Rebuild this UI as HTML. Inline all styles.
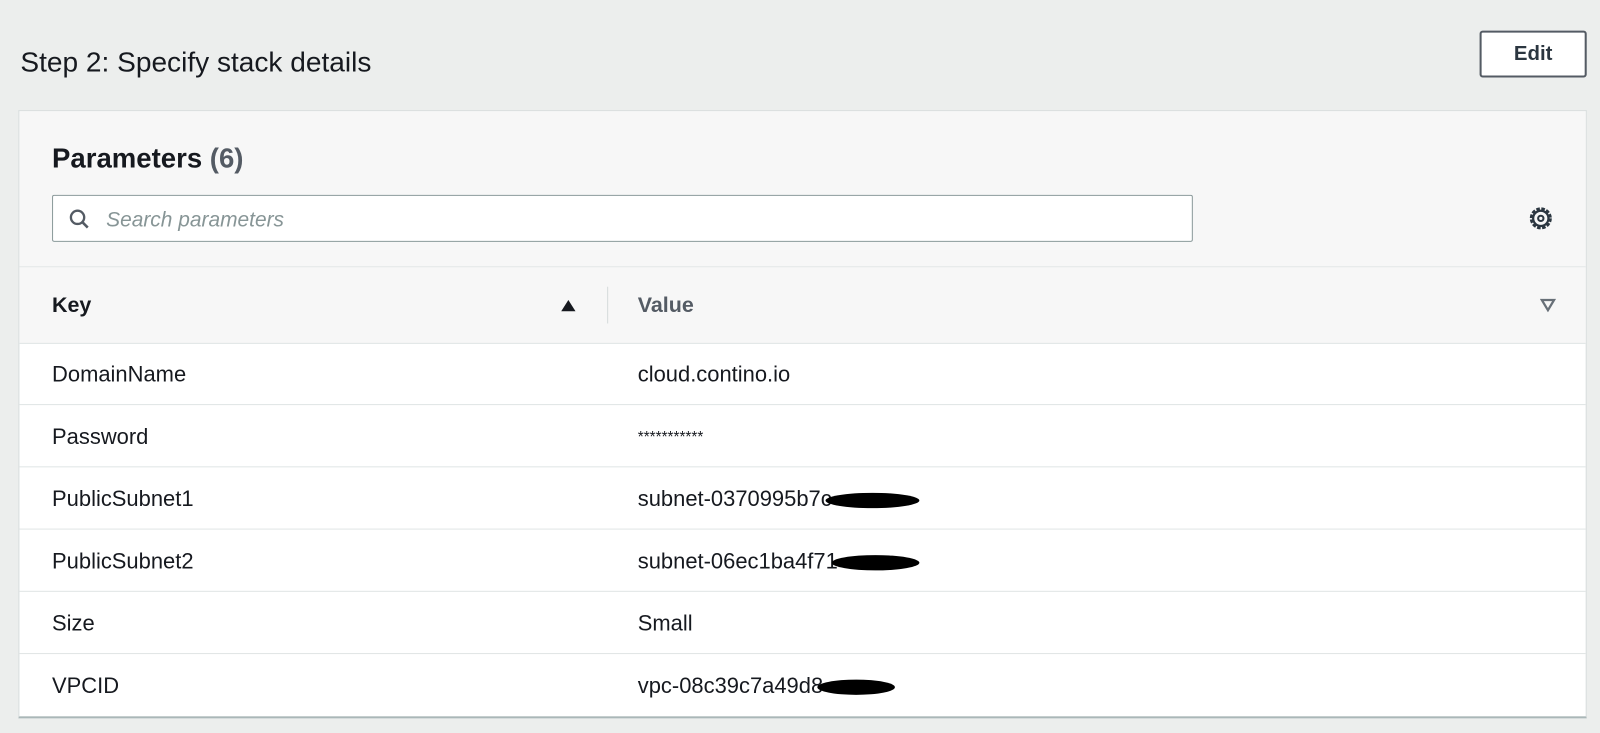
<!DOCTYPE html>
<html><head><style>
body{margin:0;width:1600px;height:733px;background:#eceeed;font-family:"Liberation Sans",sans-serif;color:#16191f;overflow:hidden}
#w{position:absolute;left:0;top:0;width:1568px;height:718px;transform:scale(1.0204);transform-origin:0 0}
.abs{position:absolute}
.title{left:20px;top:45px;font-size:27.5px;color:#16191f}
.edit{left:1450px;top:30px;border:2px solid #545b64;border-radius:3px;background:#fff;font-weight:bold;font-size:20px;color:#2b3640;display:flex;align-items:center;justify-content:center;box-sizing:border-box;width:105px;height:46px}
.card{left:18px;top:108px;width:1537px;height:596px;background:#fff;border:1px solid #d5dbdb;border-bottom:2px solid #aab7b8;box-sizing:border-box}
.hdr{left:0;top:0;width:100%;height:152px;background:#f7f7f7;border-bottom:1px solid #e0e5e5}
.th{left:0;top:153px;width:100%;height:74px;background:#f7f7f7;border-bottom:1px solid #e0e5e5}
.row{left:0;width:100%;height:61px;border-bottom:1px solid #e0e5e5;font-size:21.5px;box-sizing:border-box}
.row>span{position:absolute;top:19px;white-space:nowrap}
.k{left:32px}.v{left:606px}
.blob{display:inline-block;vertical-align:middle;background:#000;border-radius:50%;height:15px;margin-left:-6px}
</style></head><body><div id="w">
<div class="abs title">Step 2: Specify stack details</div>
<div class="abs edit">Edit</div>
<div class="abs card">
 <div class="abs hdr">
  <div class="abs" style="left:32px;top:31px;font-size:27px;font-weight:bold">Parameters <span style="color:#545b64">(6)</span></div>
  <div class="abs" style="left:32px;top:82px;width:1118px;height:46px;background:#fff;border:1px solid #8b9a9b;border-radius:2px;box-sizing:border-box">
   <svg class="abs" style="left:15px;top:12px" width="22" height="22" viewBox="0 0 22 22"><circle cx="9" cy="9" r="6.5" fill="none" stroke="#545b64" stroke-width="2.3"/><path d="M14 14l5 5" stroke="#545b64" stroke-width="2.5"/></svg>
   <span class="abs" style="left:52px;top:12px;font-size:20.5px;font-style:italic;color:#879596">Search parameters</span>
  </div>
  <svg class="abs" style="left:1478px;top:92px" width="26" height="26" viewBox="0 0 26 26"><circle cx="13" cy="13" r="9.5" fill="none" stroke="#2b3640" stroke-width="2.6" stroke-dasharray="3.5 1.5"/><circle cx="13" cy="13" r="7.5" fill="none" stroke="#2b3640" stroke-width="2.2"/><circle cx="13" cy="13" r="2.6" fill="none" stroke="#2b3640" stroke-width="2"/></svg>
 </div>
 <div class="abs th">
  <span class="abs" style="left:32px;top:26px;font-size:21px;font-weight:bold">Key</span>
  <svg class="abs" style="left:530px;top:30px" width="16" height="14"><path d="M1 13L8 2L15 13Z" fill="#16191f"/></svg>
  <div class="abs" style="left:576px;top:19px;width:1px;height:36px;background:#d5dbdb"></div>
  <span class="abs" style="left:606px;top:26px;font-size:21px;font-weight:bold;color:#545b64">Value</span>
  <svg class="abs" style="left:1490px;top:30px" width="16" height="14"><path d="M2 2L14 2L8 12Z" fill="none" stroke="#687078" stroke-width="2.2"/></svg>
 </div>
 <div class="abs row" style="top:227px"><span class="k">DomainName</span><span class="v">cloud.contino.io</span></div>
 <div class="abs row" style="top:288px"><span class="k">Password</span><span class="v" style="font-size:15px;top:23px">***********</span></div>
 <div class="abs row" style="top:349px"><span class="k">PublicSubnet1</span><span class="v">subnet-0370995b7c<i class="blob" style="width:92px"></i></span></div>
 <div class="abs row" style="top:410px"><span class="k">PublicSubnet2</span><span class="v">subnet-06ec1ba4f71<i class="blob" style="width:86px"></i></span></div>
 <div class="abs row" style="top:471px"><span class="k">Size</span><span class="v">Small</span></div>
 <div class="abs row" style="top:532px;border-bottom:none"><span class="k">VPCID</span><span class="v">vpc-08c39c7a49d8<i class="blob" style="width:76px"></i></span></div>
</div>
</div></body></html>
